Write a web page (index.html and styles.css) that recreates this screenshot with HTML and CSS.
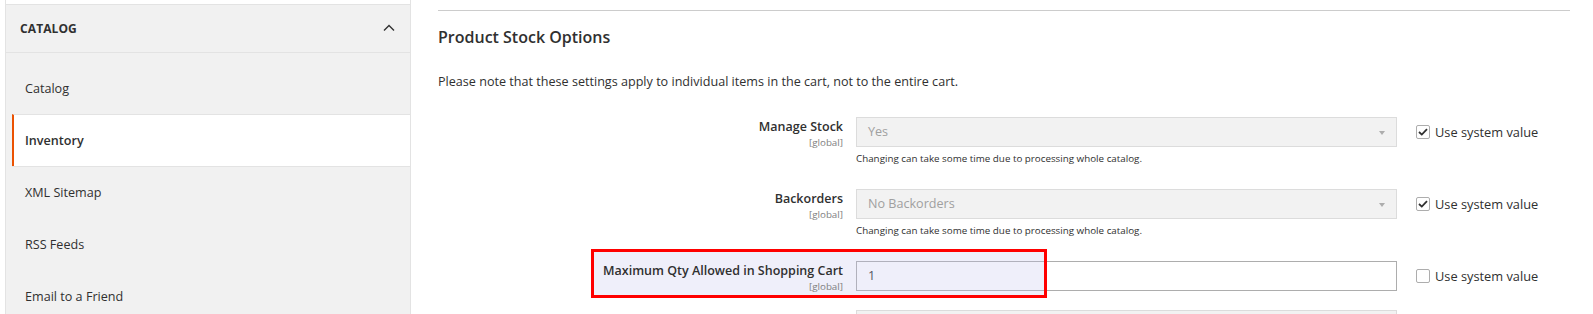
FILE: index.html
```html
<!DOCTYPE html>
<html lang="en">
<head>
  <meta charset="UTF-8" />
  <meta name="viewport" content="width=device-width, initial-scale=1.0"/>
  <title>Configuration - Inventory</title>
  <link rel="stylesheet" href="styles.css">
</head>
<body>

<div class="page">
  <aside class="sidebar">
    <div class="nav-gap"></div>
    <div class="nav-section">
      <div class="nav-title">
        <span>Catalog</span>
        <svg class="chevron" width="12" height="8" viewBox="0 0 12 8">
          <polyline points="1,6.5 6,1.5 11,6.5" fill="none" stroke="#303030" stroke-width="1.4"/>
        </svg>
      </div>
      <ul class="nav-items">
        <li>Catalog</li>
        <li class="active">Inventory</li>
        <li>XML Sitemap</li>
        <li>RSS Feeds</li>
        <li>Email to a Friend</li>
      </ul>
    </div>
  </aside>

  <main class="content">
    <div class="section">
      <h2 class="section-title">Product Stock Options</h2>
      <p class="note">Please note that these settings apply to individual items in the cart, not to the entire cart.</p>

      <div class="field">
        <div class="field-label">
          <label>Manage Stock</label>
          <span class="scope">[global]</span>
        </div>
        <div class="field-control">
          <div class="select is-disabled">Yes<span class="arrow"></span></div>
          <p class="help">Changing can take some time due to processing whole catalog.</p>
        </div>
        <label class="use-default">
          <span class="check is-checked">
            <svg width="10" height="8" viewBox="0 0 10 8"><polyline points="1,4 3.8,6.6 9,1.2" fill="none" stroke="#303030" stroke-width="1.8"/></svg>
          </span>
          Use system value
        </label>
      </div>

      <div class="field">
        <div class="field-label">
          <label>Backorders</label>
          <span class="scope">[global]</span>
        </div>
        <div class="field-control">
          <div class="select is-disabled">No Backorders<span class="arrow"></span></div>
          <p class="help">Changing can take some time due to processing whole catalog.</p>
        </div>
        <label class="use-default">
          <span class="check is-checked">
            <svg width="10" height="8" viewBox="0 0 10 8"><polyline points="1,4 3.8,6.6 9,1.2" fill="none" stroke="#303030" stroke-width="1.8"/></svg>
          </span>
          Use system value
        </label>
      </div>

      <div class="field is-marked">
        <div class="field-label">
          <label>Maximum Qty Allowed in Shopping Cart</label>
          <span class="scope">[global]</span>
        </div>
        <div class="field-control">
          <div class="input">1</div>
        </div>
        <label class="use-default">
          <span class="check"></span>
          Use system value
        </label>
        <div class="marker"></div>
      </div>

      <div class="field">
        <div class="field-label">
          <label>Out-of-Stock Threshold</label>
          <span class="scope">[global]</span>
        </div>
        <div class="field-control">
          <div class="input is-disabled">0</div>
        </div>
        <label class="use-default">
          <span class="check is-checked">
            <svg width="10" height="8" viewBox="0 0 10 8"><polyline points="1,4 3.8,6.6 9,1.2" fill="none" stroke="#303030" stroke-width="1.8"/></svg>
          </span>
          Use system value
        </label>
      </div>
    </div>
  </main>
</div>

</body>
</html>
```

FILE: styles.css
```css
* {
  box-sizing: border-box;
}

body {
  margin: 0;
  font-family: "Open Sans", Arial, sans-serif;
  color: #303030;
  background: #fff;
  overflow: hidden;
}

.page {
  display: flex;
  align-items: flex-start;
}

/* Left navigation */
.sidebar {
  width: 406px;
  margin-left: 5px;
  border-left: 1px solid #e3e3e3;
  border-right: 1px solid #e3e3e3;
  flex-shrink: 0;
}

.nav-gap {
  height: 4px;
}

.nav-section {
  background: #f1f1f1;
  border-top: 1px solid #e3e3e3;
  padding-bottom: 40px;
}

.nav-title {
  display: flex;
  align-items: center;
  justify-content: space-between;
  height: 48px;
  padding: 0 15px 0 14px;
  border-bottom: 1px solid #e3e3e3;
  font-size: 12px;
  font-weight: 700;
  text-transform: uppercase;
  letter-spacing: 0.1px;
}

.chevron {
  margin-top: -1px;
}

.nav-items {
  list-style: none;
  margin: 0;
  padding: 9px 0 0;
}

.nav-items li {
  height: 52px;
  line-height: 51px;
  border-top: 1px solid transparent;
  padding-left: 19px;
  font-size: 12.6px;
}

.nav-items li.active {
  margin-left: 6px;
  padding-left: 11px;
  background: #fff;
  border-top-color: #e3e3e3;
  border-left: 2px solid #eb5202;
  box-shadow: 0 1px 0 #e3e3e3;
  font-weight: 600;
  position: relative;
}

/* Main content */
.content {
  flex: 1;
  margin: 0 23px 0 27px;
  padding-top: 10px;
}

.section {
  border-top: 1px solid #cccccc;
}

.section-title {
  margin: 16px 0 0;
  font-size: 16px;
  line-height: 20px;
  font-weight: 600;
}

.note {
  margin: 26px 0 27px;
  font-size: 12.6px;
  line-height: 17px;
}

.field {
  display: grid;
  grid-template-columns: 405px 541px auto;
  column-gap: 13px;
  margin-bottom: 18px;
  position: relative;
}

.field-label {
  display: flex;
  flex-direction: column;
  align-items: flex-end;
  padding-top: 2px;
}

.field-label label {
  font-size: 12.5px;
  font-weight: 600;
  line-height: 16px;
  position: relative;
  z-index: 2;
}

.scope {
  margin-top: 2px;
  font-size: 9.8px;
  line-height: 11px;
  color: #808080;
  position: relative;
  z-index: 2;
}

.select,
.input {
  height: 30px;
  line-height: 28px;
  padding: 0 11px;
  font-size: 12.6px;
  border: 1px solid #adadad;
  background: #fff;
  position: relative;
}

.select.is-disabled,
.input.is-disabled {
  background: #f2f2f2;
  border-color: #dcdcdc;
  color: #a0a0a0;
}

.arrow {
  position: absolute;
  right: 11px;
  top: 13px;
  border-left: 3.5px solid transparent;
  border-right: 3.5px solid transparent;
  border-top: 4px solid #adadad;
}

.help {
  margin: 5px 0 5px;
  font-size: 9.8px;
  line-height: 14px;
}

.use-default {
  display: flex;
  align-items: center;
  gap: 5px;
  height: 30px;
  margin-left: 6px;
  font-size: 12.8px;
}

.check {
  width: 14px;
  height: 14px;
  border: 1px solid #adadad;
  border-radius: 2px;
  background: #fff;
  display: flex;
  align-items: center;
  justify-content: center;
}

/* Annotation box drawn over the highlighted row */
.marker {
  position: absolute;
  left: 153px;
  top: -12px;
  width: 456px;
  height: 49px;
  border: 3px solid #ff0000;
  background: rgba(190, 190, 235, 0.25);
  pointer-events: none;
  z-index: 1;
}
```
